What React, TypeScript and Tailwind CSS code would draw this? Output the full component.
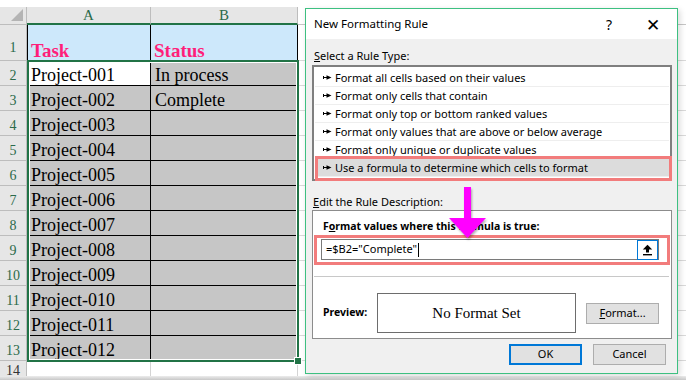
import React from "react";

// Excel sheet with a "New Formatting Rule" dialog floating over it.
const PROJECTS = Array.from({ length: 12 }, (_, i) => `Project-${String(i + 1).padStart(3, "0")}`);
const STATUS = ["In process", "Complete"];

const RULE_TYPES = [
  "Format all cells based on their values",
  "Format only cells that contain",
  "Format only top or bottom ranked values",
  "Format only values that are above or below average",
  "Format only unique or duplicate values",
  "Use a formula to determine which cells to format",
];

function Bullet() {
  return (
    <svg width="9" height="7" viewBox="0 0 9 7" className="shrink-0">
      <rect x="0" y="2" width="1" height="3" fill="#000" />
      <rect x="0" y="3" width="4" height="1" fill="#000" />
      <path d="M3.5 1.2 L8.5 3.5 L3.5 5.8 Z" fill="#000" />
    </svg>
  );
}

function UploadIcon() {
  return (
    <svg width="11" height="12" viewBox="0 0 11 12">
      <path d="M0.8 5.5 L5.5 0.8 L10.2 5.5 Z" fill="#000" />
      <rect x="4" y="5" width="3" height="3.5" fill="#000" />
      <rect x="1" y="10" width="9" height="1.4" fill="#000" />
    </svg>
  );
}

function Sheet() {
  return (
    <div className="grid grid-cols-[27px_124px_147px_1fr] grid-rows-[18px_36px_repeat(12,25px)_1fr] h-[373px] font-['Liberation_Serif','Times_New_Roman',serif]">
      {/* column headers */}
      <div className="relative bg-[#e6e6e6] border-r border-b border-[#bdbdbd]">
        <div className="absolute right-[3px] bottom-[3px] w-0 h-0 border-l-[12px] border-l-transparent border-b-[12px] border-b-[#b4b4b4]" />
      </div>
      <div className="bg-[#e6e6e6] border-r border-[#bdbdbd] border-b-2 border-b-[#217346] flex items-center justify-center text-[15px] text-[#2b6a4a]">A</div>
      <div className="bg-[#e6e6e6] border-r border-[#bdbdbd] border-b-2 border-b-[#217346] flex items-center justify-center text-[15px] text-[#2b6a4a]">B</div>
      <div className="bg-white border-b border-[#c6c6c6]" />

      {/* row 1 */}
      <div className="bg-[#e6e6e6] border-r border-b border-[#bdbdbd] flex items-end justify-center pb-[2px] text-[14px] text-[#2b6a4a]">1</div>
      <div className="bg-[#cde8fb] border-l border-r border-black flex items-end pl-[3px] text-[19px] font-bold text-[#ff1f7a] leading-[20px]">Task</div>
      <div className="bg-[#cde8fb] border-r border-black flex items-end pl-[3px] text-[19px] font-bold text-[#ff1f7a] leading-[20px]">Status</div>
      <div className="bg-white border-b border-[#dadada]" />

      {PROJECTS.map((p, i) => (
        <React.Fragment key={p}>
          <div className="bg-[#e6e6e6] border-r border-b border-[#bdbdbd] flex items-end justify-center text-[14px] text-[#2b6a4a] leading-[19px]">{i + 2}</div>
          <div className={`${i === 0 ? "bg-white" : "bg-[#c6c6c6]"} border-r border-b border-black flex items-end pl-[4px] text-[18px] text-black leading-[20px]`}>{p}</div>
          <div className="bg-[#c6c6c6] border-b border-black flex items-end pl-[4px] text-[18px] text-black leading-[20px]">{STATUS[i] ?? ""}</div>
          <div className="bg-white border-b border-[#dadada]" />
        </React.Fragment>
      ))}

      {/* row 14 */}
      <div className="bg-[#e6e6e6] border-r border-[#bdbdbd] flex items-start justify-center pt-[2px] text-[14px] text-[#333] leading-[16px]">14</div>
      <div className="bg-white border-r border-[#d4d4d4]" />
      <div className="bg-white border-r border-[#d4d4d4]" />
      <div className="bg-white" />
    </div>
  );
}

function Dialog() {
  return (
    <div className="absolute left-[305px] top-[8px] w-[373px] h-[366px] border border-[#3dc081] bg-[#f0f0f0] flex flex-col text-[11px] text-black font-['Noto_Sans','Open_Sans',sans-serif] shadow-[2px_2px_6px_rgba(0,0,0,0.15)]">
      <div className="h-[30px] shrink-0 bg-white flex items-center pl-[8px] text-[11.5px]">
        <span>New Formatting Rule</span>
        <span className="ml-auto text-[14px] w-[8px] text-center">?</span>
        <span className="ml-[33px] mr-[17px] text-[17px] leading-none font-light">✕</span>
      </div>

      <div className="mt-[9px] pl-[8px] leading-[16px]">
        <span className="underline">S</span>elect a Rule Type:
      </div>
      <div className="mt-[1px] ml-[6px] w-[360px] h-[116px] border-2 border-[#7f7f7f] bg-white pt-[2px] px-[1px]">
        {RULE_TYPES.map((t, i) => (
          <div
            key={t}
            className={`h-[18px] flex items-center gap-[3px] pl-[8px] border-b border-[#eeeeee] ${i === 5 ? "bg-[#dcdcdc]" : ""}`}
          >
            <Bullet />
            <span className="leading-none">{t}</span>
          </div>
        ))}
      </div>

      <div className="mt-[13px] pl-[7px] leading-[16px]">
        <span className="underline">E</span>dit the Rule Description:
      </div>
      <div className="relative ml-[6px] w-[360px] h-[129px] border border-[#8c8c8c] bg-white">
        <div className="mt-[7px] pl-[10px] leading-[16px] font-bold text-[10.5px]">
          F<span className="underline">o</span>rmat values where this formula is true:
        </div>
        <div className="mt-[5px] ml-[8px] w-[338px] h-[21px] border border-[#7a7a7a] flex items-center pl-[4px] pr-0">
          <span>=$B2="Complete"</span>
          <span className="ml-[1px] w-px h-[14px] bg-black" />
          <div className="ml-auto w-[21px] h-[20px] border border-[#0078d7] bg-white flex items-center justify-center">
            <UploadIcon />
          </div>
        </div>
        <div className="mt-[16px] ml-[1px] w-[355px] h-px bg-[#c8c8c8]" />
        <div className="mt-[16px] flex items-center pl-[10px]">
          <span className="w-[54px] font-bold text-[10.5px]">Preview:</span>
          <div className="w-[199px] h-[40px] border border-[#6d6d6d] flex items-center justify-center font-['Liberation_Serif','Times_New_Roman',serif] text-[15px]">
            No Format Set
          </div>
          <button type="button" className="ml-[10px] w-[73px] h-[21px] border border-[#adadad] bg-[#e1e1e1] flex items-center justify-center">
            <span className="underline">F</span>ormat...
          </button>
        </div>
        {/* highlight around the formula input */}
        <div className="absolute left-px top-[24px] w-[356px] h-[30px] border-[3px] border-[#f27c7c]" />
      </div>

      <div className="mt-[5px] flex justify-end gap-[11px] pr-[11px]">
        <button type="button" className="w-[73px] h-[21px] border-2 border-[#0078d7] bg-[#e1e1e1] flex items-center justify-center">OK</button>
        <button type="button" className="w-[73px] h-[21px] border border-[#adadad] bg-[#e1e1e1] flex items-center justify-center">Cancel</button>
      </div>

      {/* highlight around the chosen rule type */}
      <div className="absolute left-[9px] top-[147px] w-[357px] h-[25px] border-[3px] border-[#f27c7c]" />

      {/* magenta callout arrow */}
      <svg width="42" height="56" viewBox="0 0 42 56" className="absolute left-[140px] top-[177px] drop-shadow-[1px_2px_1px_rgba(0,0,0,0.3)]">
        <rect x="18" y="1" width="7" height="33" fill="#ff00ff" />
        <path d="M3 32 L40 32 L21.5 52 Z" fill="#ff00ff" />
      </svg>
    </div>
  );
}

export default function App() {
  return (
    <div className="relative w-[686px] h-[380px] overflow-hidden bg-white">
      <div className="h-[7px]" />
      <Sheet />
      {/* current selection A2:B13 */}
      <div className="absolute left-[27px] top-[60px] w-[272px] h-[302px] border-2 border-[#217346] shadow-[inset_0_0_0_1px_#ffffff]" />
      <div className="absolute left-[295px] top-[358px] w-[6px] h-[6px] bg-[#217346] outline outline-1 outline-white" />
      <div className="absolute left-0 bottom-0 w-full h-[4px] bg-gradient-to-b from-[#ececec] to-[#c8c8c8]" />
      <Dialog />
    </div>
  );
}
